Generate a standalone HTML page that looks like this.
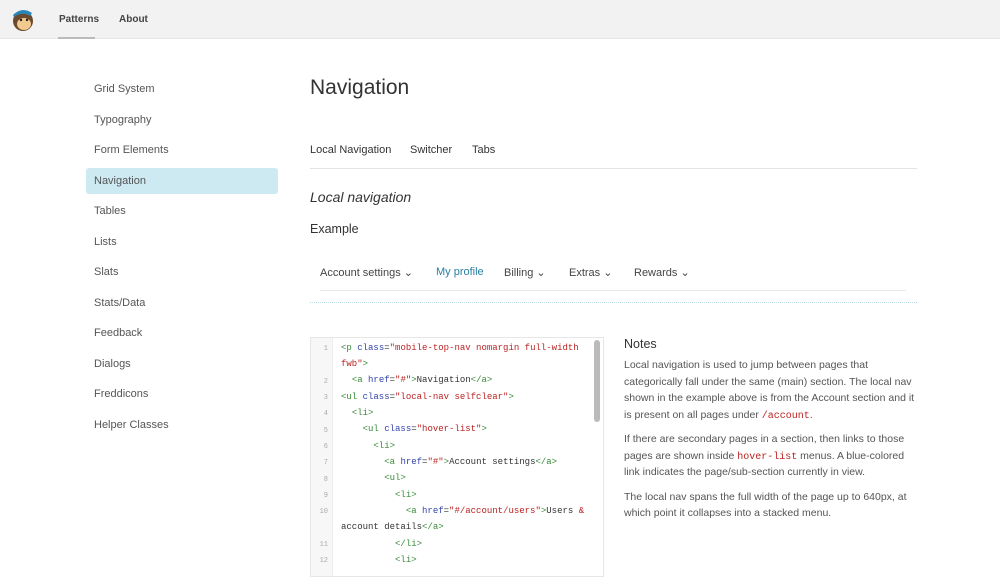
<!DOCTYPE html>
<html><head><meta charset="utf-8"><style>
*{margin:0;padding:0;box-sizing:border-box}
body{width:1000px;height:563px;overflow:hidden;background:#fff;font-family:"Liberation Sans",sans-serif;color:#444;position:relative}
.top{position:absolute;left:0;top:0;width:1000px;height:39px;background:#f2f2f2;border-bottom:1px solid #e6e6e6}
.top a{position:absolute;top:14px;font-size:10px;color:#444;font-weight:bold}
.ul{position:absolute;left:58px;top:37px;width:37px;height:2px;background:#bbb}
.side div{position:absolute;left:94px;font-size:11px;color:#555}
.sel{position:absolute;left:86px;top:168px;width:192px;height:26px;background:#cdeaf2;border-radius:3px}
.t{position:absolute;white-space:nowrap}
.code{position:absolute;left:310px;top:337px;width:294px;height:240px;border:1px solid #e6e6e6;background:#fff;overflow:hidden}
.gut{position:absolute;left:0;top:0;width:22px;height:100%;background:#f7f7f7;border-right:1px solid #eee}
.ln{position:absolute;left:0;width:17px;text-align:right;font:7px "Liberation Mono",monospace;color:#aaa}
.cl{position:absolute;left:30px;font:9px "Liberation Mono",monospace;color:#333;white-space:pre}
.g{color:#3a8a3a}.b{color:#3344aa}.r{color:#b22}
.sb{position:absolute;left:283px;top:2px;width:6px;height:82px;background:#bbb;border-radius:3px}
.notes p{font-size:10.5px;line-height:16.5px;color:#555}
code{font:10px "Liberation Mono",monospace;color:#b22}
</style></head><body>
<div class="top">
<svg style="position:absolute;left:10px;top:6px" width="26" height="27" viewBox="0 0 26 27"><ellipse cx="13" cy="15" rx="10" ry="10" fill="#6b4a2e"/><ellipse cx="14" cy="18" rx="7" ry="6" fill="#f2c98e"/><path d="M3 9 Q12 0 22 7 L20 10 Q12 5 4 11Z" fill="#2a86b8"/><circle cx="11" cy="14" r="1.2" fill="#222"/><circle cx="17" cy="14" r="1.2" fill="#222"/></svg>
<a style="left:59px">Patterns</a><a style="left:119px">About</a>
</div>
<div class="ul"></div>
<div class="sel"></div>
<div class="side">
<div style="top:83px">Grid System</div><div style="top:114px">Typography</div><div style="top:144px">Form Elements</div><div style="top:175px">Navigation</div><div style="top:205px">Tables</div><div style="top:236px">Lists</div><div style="top:266px">Slats</div><div style="top:297px">Stats/Data</div><div style="top:327px">Feedback</div><div style="top:358px">Dialogs</div><div style="top:388px">Freddicons</div><div style="top:419px">Helper Classes</div>
</div>
<div class="t" style="left:310px;top:76px;font-size:21px;color:#333">Navigation</div>
<div class="t" style="left:310px;top:144px;font-size:11px;color:#333">Local Navigation</div>
<div class="t" style="left:410px;top:144px;font-size:11px;color:#333">Switcher</div>
<div class="t" style="left:472px;top:144px;font-size:11px;color:#333">Tabs</div>
<div style="position:absolute;left:310px;top:168px;width:607px;height:1px;background:#e3e3e3"></div>
<div class="t" style="left:310px;top:189px;font-size:14px;font-style:italic;color:#333">Local navigation</div>
<div class="t" style="left:310px;top:222px;font-size:12.5px;color:#333">Example</div>
<div class="t" style="left:320px;top:266px;font-size:11px;color:#444">Account settings ⌄</div>
<div class="t" style="left:436px;top:266px;font-size:11px;color:#2a7fa0">My profile</div>
<div class="t" style="left:504px;top:266px;font-size:11px;color:#444">Billing ⌄</div>
<div class="t" style="left:569px;top:266px;font-size:11px;color:#444">Extras ⌄</div>
<div class="t" style="left:634px;top:266px;font-size:11px;color:#444">Rewards ⌄</div>
<div style="position:absolute;left:320px;top:290px;width:586px;height:1px;background:#e8e8e8"></div>
<div style="position:absolute;left:310px;top:302px;width:607px;border-top:1px dotted #b8dce6"></div>
<div class="code"><div class="gut"></div>
<div class="ln" style="top:7px">1</div><div class="ln" style="top:40px">2</div><div class="ln" style="top:56px">3</div><div class="ln" style="top:72px">4</div><div class="ln" style="top:89px">5</div><div class="ln" style="top:105px">6</div><div class="ln" style="top:121px">7</div><div class="ln" style="top:138px">8</div><div class="ln" style="top:154px">9</div><div class="ln" style="top:170px">10</div><div class="ln" style="top:203px">11</div><div class="ln" style="top:219px">12</div>
<div class="cl" style="top:5px"><span class="g">&lt;p</span> <span class="b">class</span>=<span class="r">"mobile-top-nav nomargin full-width</span></div>
<div class="cl" style="top:21px"><span class="r">fwb"</span><span class="g">&gt;</span></div>
<div class="cl" style="top:37px">  <span class="g">&lt;a</span> <span class="b">href</span>=<span class="r">"#"</span><span class="g">&gt;</span>Navigation<span class="g">&lt;/a&gt;</span></div>
<div class="cl" style="top:54px"><span class="g">&lt;ul</span> <span class="b">class</span>=<span class="r">"local-nav selfclear"</span><span class="g">&gt;</span></div>
<div class="cl" style="top:70px">  <span class="g">&lt;li&gt;</span></div>
<div class="cl" style="top:86px">    <span class="g">&lt;ul</span> <span class="b">class</span>=<span class="r">"hover-list"</span><span class="g">&gt;</span></div>
<div class="cl" style="top:103px">      <span class="g">&lt;li&gt;</span></div>
<div class="cl" style="top:119px">        <span class="g">&lt;a</span> <span class="b">href</span>=<span class="r">"#"</span><span class="g">&gt;</span>Account settings<span class="g">&lt;/a&gt;</span></div>
<div class="cl" style="top:135px">        <span class="g">&lt;ul&gt;</span></div>
<div class="cl" style="top:152px">          <span class="g">&lt;li&gt;</span></div>
<div class="cl" style="top:168px">            <span class="g">&lt;a</span> <span class="b">href</span>=<span class="r">"#/account/users"</span><span class="g">&gt;</span>Users <span class="r">&amp;</span></div>
<div class="cl" style="top:184px">account details<span class="g">&lt;/a&gt;</span></div>
<div class="cl" style="top:201px">          <span class="g">&lt;/li&gt;</span></div>
<div class="cl" style="top:217px">          <span class="g">&lt;li&gt;</span></div>
<div class="sb"></div>
</div>
<div class="t" style="left:624px;top:337px;font-size:12.5px;color:#333">Notes</div>
<div class="notes" style="position:absolute;left:624px;top:357px;width:295px">
<p>Local navigation is used to jump between pages that categorically fall under the same (main) section. The local nav shown in the example above is from the Account section and it is present on all pages under <code>/account</code>.</p>
<p style="margin-top:8px">If there are secondary pages in a section, then links to those pages are shown inside <code>hover-list</code> menus. A blue-colored link indicates the page/sub-section currently in view.</p>
<p style="margin-top:8px">The local nav spans the full width of the page up to 640px, at which point it collapses into a stacked menu.</p>
</div>
</body></html>
